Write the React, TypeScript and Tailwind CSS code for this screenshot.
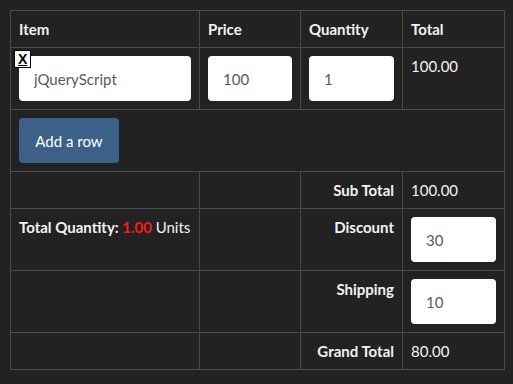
import { useState } from "react"

const cell = "border border-[#4a4a4a] p-2 align-top"
const inputCls =
  "w-full h-[45px] rounded bg-white px-[15px] text-[15px] text-[#5a5a5a] outline-none"

export default function App() {
  const [item, setItem] = useState("jQueryScript")
  const [price, setPrice] = useState("100")
  const [qty, setQty] = useState("1")
  const [discount, setDiscount] = useState("30")
  const [shipping, setShipping] = useState("10")

  const p = parseFloat(price) || 0
  const q = parseFloat(qty) || 0
  const sub = p * q
  const grand = sub - (parseFloat(discount) || 0) + (parseFloat(shipping) || 0)

  return (
    <div
      className="min-h-[384px] bg-[#222222] pt-[10px] pl-[10px] text-[15px] leading-5 text-[#f2f2f2]"
      style={{ fontFamily: "Lato, 'Noto Sans', sans-serif" }}
    >
      <table className="w-[494px] table-fixed border-collapse">
        <colgroup>
          <col className="w-[189px]" />
          <col className="w-[101px]" />
          <col className="w-[102px]" />
          <col className="w-[102px]" />
        </colgroup>
        <thead>
          <tr className="text-left font-bold">
            <th className={cell}>Item</th>
            <th className={cell}>Price</th>
            <th className={cell}>Quantity</th>
            <th className={cell}>Total</th>
          </tr>
        </thead>
        <tbody>
          <tr>
            <td className={cell + " relative"}>
              <input className={inputCls} value={item} onChange={(e) => setItem(e.target.value)} />
              <a
                href="#"
                className="absolute left-[3px] top-[2px] border border-black bg-white px-[3px] text-[14px] leading-[16px] font-bold text-black underline"
                style={{ fontFamily: "'Liberation Sans', sans-serif" }}
              >
                X
              </a>
            </td>
            <td className={cell}>
              <input className={inputCls} value={price} onChange={(e) => setPrice(e.target.value)} />
            </td>
            <td className={cell}>
              <input className={inputCls} value={qty} onChange={(e) => setQty(e.target.value)} />
            </td>
            <td className={cell}>{sub.toFixed(2)}</td>
          </tr>
          <tr>
            <td className={cell} colSpan={4}>
              <button className="h-[45px] w-[100px] rounded bg-[#3b6188] text-[15px] text-white">
                Add a row
              </button>
            </td>
          </tr>
          <tr>
            <td className={cell}></td>
            <td className={cell}></td>
            <td className={cell + " text-right font-bold"}>Sub Total</td>
            <td className={cell}>{sub.toFixed(2)}</td>
          </tr>
          <tr>
            <td className={cell + " font-bold"}>
              Total Quantity: <span className="text-[#ff1a1a]">{q.toFixed(2)}</span>{" "}
              <span className="font-normal">Units</span>
            </td>
            <td className={cell}></td>
            <td className={cell + " text-right font-bold"}>Discount</td>
            <td className={cell}>
              <input className={inputCls} value={discount} onChange={(e) => setDiscount(e.target.value)} />
            </td>
          </tr>
          <tr>
            <td className={cell}></td>
            <td className={cell}></td>
            <td className={cell + " text-right font-bold"}>Shipping</td>
            <td className={cell}>
              <input className={inputCls} value={shipping} onChange={(e) => setShipping(e.target.value)} />
            </td>
          </tr>
          <tr>
            <td className={cell}></td>
            <td className={cell}></td>
            <td className={cell + " text-right font-bold"}>Grand Total</td>
            <td className={cell}>{grand.toFixed(2)}</td>
          </tr>
        </tbody>
      </table>
    </div>
  )
}
